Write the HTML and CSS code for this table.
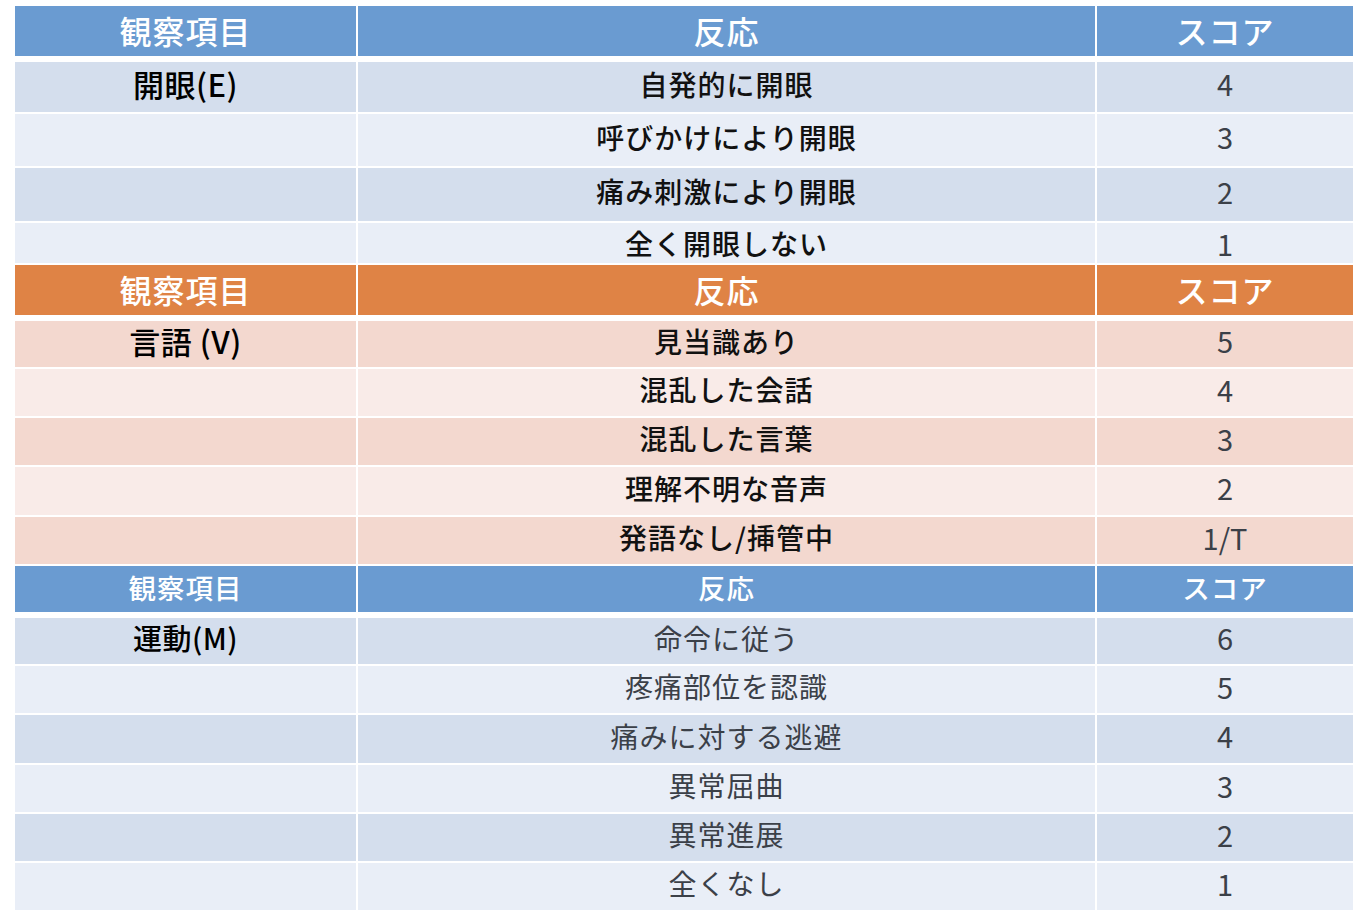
FILE: index.html
```html
<!DOCTYPE html>
<html lang="ja">
<head>
<meta charset="utf-8">
<link rel="stylesheet" href="styles.css">
</head>
<body>
<div class="sheet">
  <div class="row head blue h50"><div class="c">観察項目</div><div class="c">反応</div><div class="c">スコア</div></div>
  <div class="row after-head b1 h50 up"><div class="c cat">開眼(E)</div><div class="c">自発的に開眼</div><div class="c num">4</div></div>
  <div class="row b2 h52 up"><div class="c cat"></div><div class="c">呼びかけにより開眼</div><div class="c num">3</div></div>
  <div class="row b1 h53 up"><div class="c cat"></div><div class="c">痛み刺激により開眼</div><div class="c num">2</div></div>
  <div class="row b2 h40"><div class="c cat"></div><div class="c">全く開眼しない</div><div class="c num">1</div></div>

  <div class="row head orange h50"><div class="c">観察項目</div><div class="c">反応</div><div class="c">スコア</div></div>
  <div class="row after-head p1 h46 up"><div class="c cat">言語 (V)</div><div class="c">見当識あり</div><div class="c num">5</div></div>
  <div class="row p2 h47 up"><div class="c cat"></div><div class="c">混乱した会話</div><div class="c num">4</div></div>
  <div class="row p1 h47 up"><div class="c cat"></div><div class="c">混乱した言葉</div><div class="c num">3</div></div>
  <div class="row p2 h48 up"><div class="c cat"></div><div class="c">理解不明な音声</div><div class="c num">2</div></div>
  <div class="row p1 h47 up"><div class="c cat"></div><div class="c">発語なし/挿管中</div><div class="c num">1/T</div></div>

  <div class="row head blue small h46"><div class="c">観察項目</div><div class="c">反応</div><div class="c">スコア</div></div>
  <div class="row after-head b1 h46 light up"><div class="c cat">運動(M)</div><div class="c">命令に従う</div><div class="c num">6</div></div>
  <div class="row b2 h47 light up"><div class="c cat"></div><div class="c">疼痛部位を認識</div><div class="c num">5</div></div>
  <div class="row b1 h48 light up"><div class="c cat"></div><div class="c">痛みに対する逃避</div><div class="c num">4</div></div>
  <div class="row b2 h47 light up"><div class="c cat"></div><div class="c">異常屈曲</div><div class="c num">3</div></div>
  <div class="row b1 h47 light up"><div class="c cat"></div><div class="c">異常進展</div><div class="c num">2</div></div>
  <div class="row b2 h47 light up"><div class="c cat"></div><div class="c">全くなし</div><div class="c num">1</div></div>
</div>
</body>
</html>
```
FILE: styles.css
```css
html, body {
  margin: 0;
  padding: 0;
  background: #ffffff;
}
body {
  font-family: "Noto Sans CJK JP", "Noto Sans", sans-serif;
}
.sheet {
  padding: 6px 9px 0 15px;
  width: 1338px;
  display: flex;
  flex-direction: column;
  gap: 2px;
}
.row {
  display: grid;
  grid-template-columns: 341px 737px 256px;
  column-gap: 2px;
}
.row.after-head { margin-top: 4px; }
.h40 { height: 40px; }
.h46 { height: 46px; }
.h47 { height: 47px; }
.h48 { height: 48px; }
.h50 { height: 50px; }
.h52 { height: 52px; }
.h53 { height: 53px; }
.c {
  display: flex;
  align-items: center;
  justify-content: center;
  box-sizing: border-box;
  font-size: 28px;
  font-weight: 500;
  color: #111111;
  letter-spacing: 1px;
  line-height: 1;
}
.up .c { padding-bottom: 7px; }
.c.cat { font-size: 31px; color: #000; letter-spacing: 0.5px; }
.c.num { font-size: 29px; font-weight: 400; color: #3b4048; letter-spacing: 0; }
.head .c { color: #ffffff; font-size: 32px; font-weight: 500; letter-spacing: 1px; padding-bottom: 3px; }
.head.small .c { font-size: 27.5px; letter-spacing: 1px; }
.blue .c { background: #6a9bd1; }
.orange .c { background: #df8345; }
.b1 .c { background: #d4deed; }
.b2 .c { background: #e9eef7; }
.p1 .c { background: #f3d8cf; }
.p2 .c { background: #f9ebe8; }
.light .c { color: #3b4048; font-weight: 400; }
.light .c.cat { color: #000; font-weight: 500; font-size: 29px; }
```
